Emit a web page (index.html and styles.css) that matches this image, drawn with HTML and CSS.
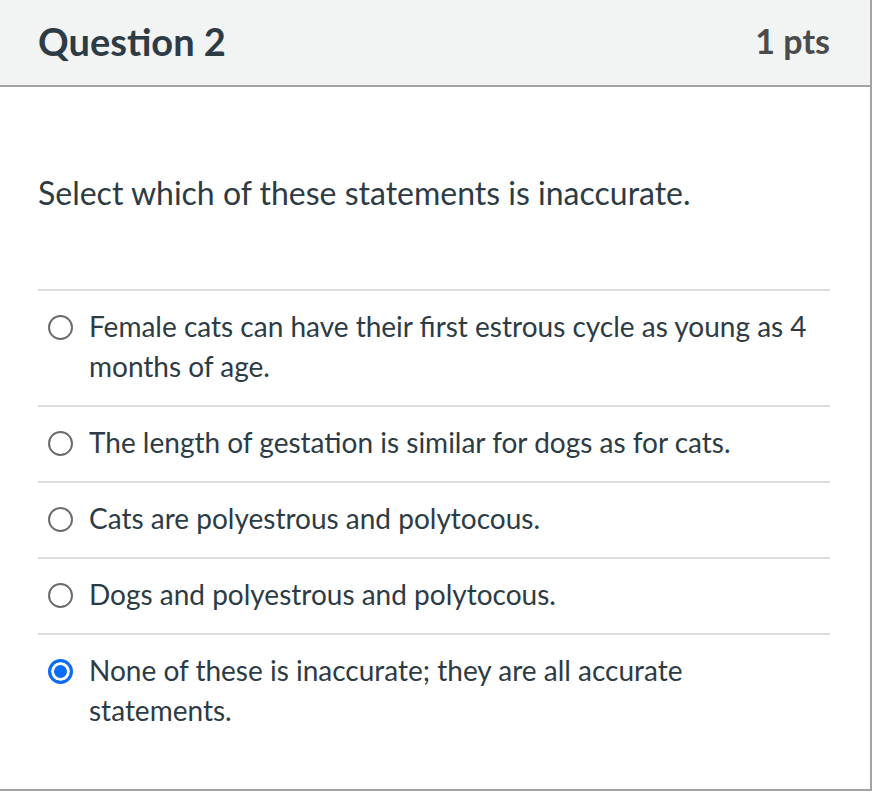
FILE: index.html
```html
<!DOCTYPE html>
<html lang="en">
<head>
    <meta charset="UTF-8">
    <title>Question 2</title>
    <link rel="stylesheet" href="styles.css">
</head>
<body>
    <div class="question">
        <div class="question-header">
            <h2 class="question-title">Question 2</h2>
            <span class="question-points">1 pts</span>
        </div>

        <div class="question-body">
            <p class="question-text">Select which of these statements is inaccurate.</p>

            <div class="answers">
                <label class="answer">
                    <span class="radio"></span>
                    <span class="answer-text">Female cats can have their first estrous cycle as young as 4 months of age.</span>
                </label>
                <label class="answer">
                    <span class="radio"></span>
                    <span class="answer-text">The length of gestation is similar for dogs as for cats.</span>
                </label>
                <label class="answer">
                    <span class="radio"></span>
                    <span class="answer-text">Cats are polyestrous and polytocous.</span>
                </label>
                <label class="answer">
                    <span class="radio"></span>
                    <span class="answer-text">Dogs and polyestrous and polytocous.</span>
                </label>
                <label class="answer">
                    <span class="radio checked"></span>
                    <span class="answer-text">None of these is inaccurate; they are all accurate statements.</span>
                </label>
            </div>
        </div>
    </div>
</body>
</html>
```

FILE: styles.css
```css
* {
    margin: 0;
    padding: 0;
    box-sizing: border-box;
}

body {
    font-family: 'Lato', 'Open Sans', sans-serif;
    background: #fff;
    color: #2d3b45;
}

.question {
    width: 872px;
    height: 791px;
    border-right: 2px solid #a3a3a3;
    border-bottom: 2px solid #a3a3a3;
}

.question-header {
    height: 87px;
    background: #f2f3f3;
    border-bottom: 2px solid #a3a3a3;
    display: flex;
    justify-content: space-between;
    align-items: center;
    padding: 0 40px 4px 38px;
}

.question-title {
    font-size: 38px;
    font-weight: bold;
    color: #2d3b45;
}

.question-points {
    font-size: 34px;
    font-weight: bold;
    color: #4b4b4b;
}

.question-body {
    padding: 86px 40px 0 38px;
}

.question-text {
    font-size: 32px;
    line-height: 40px;
    margin-bottom: 76px;
}

.answer {
    display: flex;
    align-items: flex-start;
    border-top: 2px solid #dcdcdc;
    padding: 15px 20px 19px 10px;
    font-size: 28px;
    line-height: 40px;
}

.radio {
    flex: none;
    width: 25px;
    height: 25px;
    margin-top: 9px;
    margin-right: 16px;
    border: 2px solid #6b6b6b;
    border-radius: 50%;
    background: #fff;
}

.radio.checked {
    border: 3px solid #0b6cf7;
    box-shadow: inset 0 0 0 3px #fff;
    background: #0b6cf7;
}
```
